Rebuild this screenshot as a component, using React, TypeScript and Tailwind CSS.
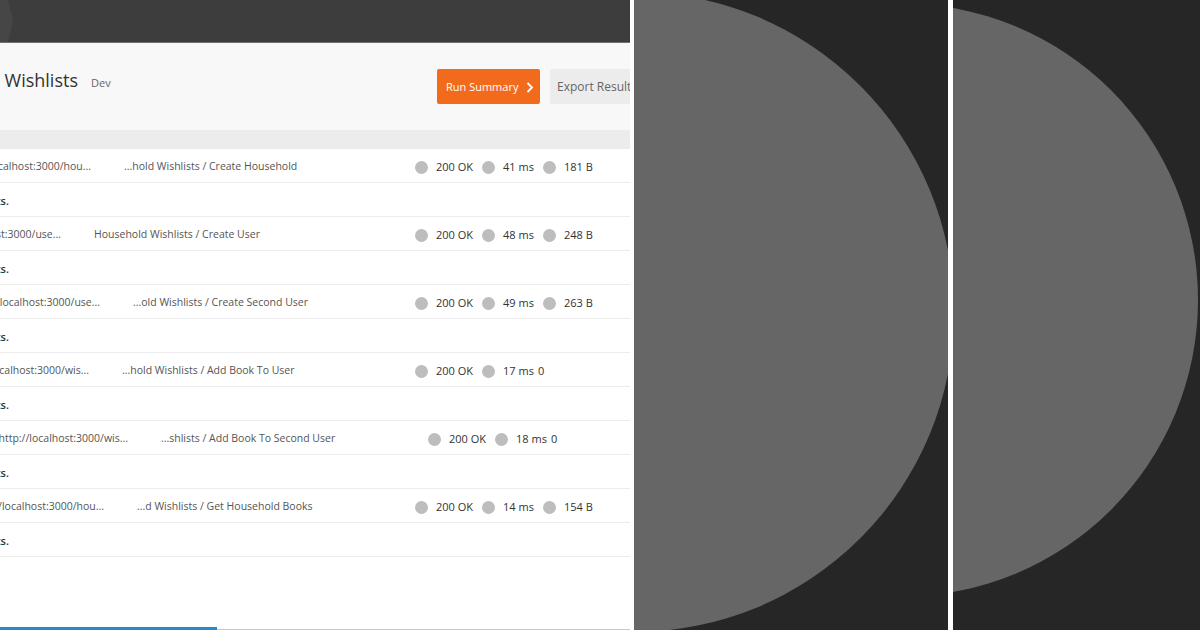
import type { ReactNode } from 'react';

type Run = {
  url: string;
  urlEnd: number;
  name: string;
  statsAt: number;
  time: string;
  size?: string;
};

const RUNS: Run[] = [
  { url: 'http://localhost:3000/hou...', urlEnd: 91, name: '...hold Wishlists / Create Household', statsAt: 415, time: '41 ms', size: '181 B' },
  { url: 'http://localhost:3000/use...', urlEnd: 61, name: 'Household Wishlists / Create User', statsAt: 415, time: '48 ms', size: '248 B' },
  { url: 'http://localhost:3000/use...', urlEnd: 100, name: '...old Wishlists / Create Second User', statsAt: 415, time: '49 ms', size: '263 B' },
  { url: 'http://localhost:3000/wis...', urlEnd: 89, name: '...hold Wishlists / Add Book To User', statsAt: 415, time: '17 ms' },
  { url: 'POST http://localhost:3000/wis...', urlEnd: 128, name: '...shlists / Add Book To Second User', statsAt: 428, time: '18 ms' },
  { url: 'http://localhost:3000/hou...', urlEnd: 104, name: '...d Wishlists / Get Household Books', statsAt: 415, time: '14 ms', size: '154 B' },
];

const font = { fontFamily: '"Open Sans", "Liberation Sans", sans-serif' };

function Dot() {
  return <span className="h-[13px] w-[13px] shrink-0 rounded-full bg-[#bdbdbd]" />;
}

function Stat({ children }: { children: ReactNode }) {
  return (
    <span className="flex items-center gap-2">
      <Dot />
      <span>{children}</span>
    </span>
  );
}

function RunRows({ run }: { run: Run }) {
  return (
    <>
      <div className="flex h-[34px] shrink-0 items-center border-b border-[#ececec] pt-[3px]">
        <div className="flex shrink-0 items-center text-[10.5px] text-[#555]" style={{ width: run.statsAt }}>
          <div
            className="flex shrink-0 justify-end overflow-hidden whitespace-nowrap"
            style={{ width: run.urlEnd }}
          >
            {run.url}
          </div>
          <span className="ml-[33px] whitespace-nowrap">{run.name}</span>
        </div>
        <div className="flex items-center gap-[9px] whitespace-nowrap text-[11px] text-[#333]">
          <Stat>200 OK</Stat>
          {run.size ? (
            <>
              <Stat>{run.time}</Stat>
              <Stat>{run.size}</Stat>
            </>
          ) : (
            <span className="flex items-center gap-2">
              <Dot />
              <span>{run.time}</span>
              <span className="-ml-1">0</span>
            </span>
          )}
        </div>
      </div>
      <div className="flex h-[34px] shrink-0 items-center border-b border-[#ececec] pt-[3px] text-[11px]">
        <div className="flex w-[9px] shrink-0 justify-end overflow-hidden whitespace-nowrap font-semibold text-[#333]">
          This request does not have any tests.
        </div>
      </div>
    </>
  );
}

function Disc({ width, cx, cy, r }: { width: number; cx: number; cy: number; r: number }) {
  return (
    <svg width={width} height={630} viewBox={`0 0 ${width} 630`} className="block">
      <rect width={width} height={630} fill="#262626" />
      <circle cx={cx} cy={cy} r={r} fill="#666666" />
    </svg>
  );
}

export default function App() {
  return (
    <div className="flex h-[630px] w-[1200px] overflow-hidden bg-white" style={font}>
      <div className="flex w-[630px] shrink-0 flex-col overflow-hidden bg-white">
        <div className="h-[43px] shrink-0 border-b border-[#6e6e6e] bg-[#3d3d3d]">
          <svg width="16" height="42" viewBox="0 0 16 42" className="block">
            <polygon points="0,0 8,0 13,21 8,42 0,42" fill="#464646" />
          </svg>
        </div>

        <div className="flex h-[87px] shrink-0 items-start bg-[#f8f8f8]">
          <div className="mt-[25px] flex w-[437px] shrink-0 items-baseline">
            <div className="flex w-[78px] shrink-0 justify-end overflow-hidden whitespace-nowrap text-[18px] leading-[24px] text-[#333]">
              Household Wishlists
            </div>
            <span className="ml-[13px] text-[11px] text-[#666]">Dev</span>
          </div>
          <button className="mt-[26px] flex h-[35px] w-[103px] shrink-0 items-center gap-2 rounded-[2px] bg-[#f26b1d] pl-[9px] pt-px text-[11px] text-white">
            Run Summary
            <svg width="8" height="11" viewBox="0 0 8 11" fill="none" stroke="white" strokeWidth="1.8">
              <polyline points="1.5,1 6,5.5 1.5,10" />
            </svg>
          </button>
          <button className="ml-[10px] mt-[26px] flex h-[35px] w-[100px] shrink-0 items-center whitespace-nowrap rounded-[2px] bg-[#ececec] pl-[7px] pt-px text-[12px] text-[#666]">
            Export Results
          </button>
        </div>

        <div className="h-[19px] shrink-0 bg-[#ececec]" />

        {RUNS.map((run, i) => (
          <RunRows key={i} run={run} />
        ))}

        <div className="mt-auto flex h-[3px] shrink-0 items-end">
          <div className="h-[3px] w-[217px] bg-[#2b8ac6]" />
          <div className="h-px flex-1 bg-[#c8c8c8]" />
        </div>
      </div>

      <div className="ml-[4px] w-[314px] shrink-0">
        <Disc width={314} cx={0} cy={312} r={320} />
      </div>
      <div className="ml-[5px] flex-1">
        <Disc width={247} cx={-51.5} cy={300} r={296.5} />
      </div>
    </div>
  );
}
